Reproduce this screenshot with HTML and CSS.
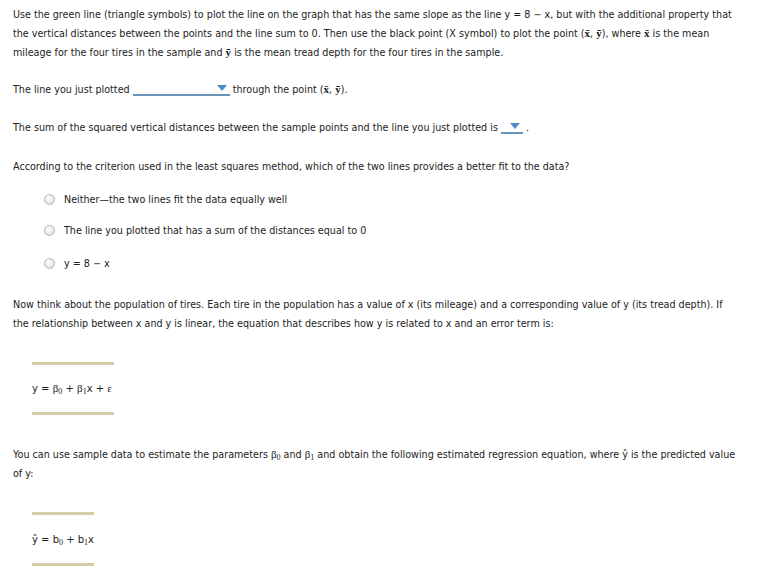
FILE: index.html
```html
<!DOCTYPE html>
<html>
<head>
<meta charset="utf-8">
<link rel="stylesheet" href="styles.css">
</head>
<body>
<div class="page">
  <p class="para p1">Use the green line (triangle symbols) to plot the line on the graph that has the same slope as the line y = 8 − x, but with the additional property that the vertical distances between the points and the line sum to 0. Then use the black point (X symbol) to plot the point (<b class="m">x̄</b>, <b class="m">ȳ</b>), where <b class="m">x̄</b> is the mean mileage for the four tires in the sample and <b class="m">ȳ</b> is the mean tread depth for the four tires in the sample.</p>

  <p class="para p2">The line you just plotted <span class="dd dd-wide"><span class="arrow"></span></span> through the point (<b class="m">x̄</b>, <b class="m">ȳ</b>).</p>

  <p class="para p3">The sum of the squared vertical distances between the sample points and the line you just plotted is <span class="dd dd-small"><span class="arrow"></span></span> .</p>

  <p class="para p4">According to the criterion used in the least squares method, which of the two lines provides a better fit to the data?</p>

  <div class="options">
    <label class="opt"><span class="radio"></span>Neither—the two lines fit the data equally well</label>
    <label class="opt"><span class="radio"></span>The line you plotted that has a sum of the distances equal to 0</label>
    <label class="opt opt-last"><span class="radio"></span>y = 8 − x</label>
  </div>

  <p class="para p5">Now think about the population of tires. Each tire in the population has a value of x (its mileage) and a corresponding value of y (its tread depth). If the relationship between x and y is linear, the equation that describes how y is related to x and an error term is:</p>

  <div class="eqbox eq1">y = <span class="s">β</span><sub>0</sub> + <span class="s">β</span><sub>1</sub>x + <span class="s">ε</span></div>

  <p class="para p6">You can use sample data to estimate the parameters <span class="s">β</span><sub>0</sub> and <span class="s">β</span><sub>1</sub> and obtain the following estimated regression equation, where ŷ is the predicted value of y:</p>

  <div class="eqbox eq2">ŷ = b<sub>0</sub> + b<sub>1</sub>x</div>
</div>
</body>
</html>
```

FILE: styles.css
```css
html, body {
  margin: 0;
  padding: 0;
  background: #ffffff;
}

.page {
  padding: 5px 30px 0 13px;
  font-family: "DejaVu Sans", Verdana, sans-serif;
  font-size: 9.6px;
  line-height: 19px;
  color: #222222;
}

.para {
  margin: 0;
}

.p2 { margin-top: 18px; }
.p3 { margin-top: 19px; }
.p4 { margin-top: 20px; }
.p5 { margin-top: 22px; }
.p6 { margin-top: 30px; }

.m {
  font-family: "Liberation Serif", "Times New Roman", serif;
  font-weight: bold;
  font-size: 11px;
  line-height: 1;
}

.s {
  font-family: "Liberation Serif", "Times New Roman", serif;
  font-size: 11px;
  line-height: 1;
}

sub {
  font-size: 8px;
  line-height: 0;
  vertical-align: -2px;
  font-family: "Liberation Serif", serif;
}

.dd {
  display: inline-block;
  position: relative;
  height: 12px;
  vertical-align: -3px;
  border-bottom: 2px solid #6a94b8;
}

.dd-wide { width: 97px; }
.dd-small { width: 22px; }

.arrow {
  position: absolute;
  right: 3px;
  top: 3px;
  width: 0;
  height: 0;
  border-left: 5px solid transparent;
  border-right: 5px solid transparent;
  border-top: 6px solid #4f8cc9;
}

.options {
  display: flex;
  flex-direction: column;
  gap: 12px;
  margin-top: 14px;
  padding-left: 31px;
}

.opt {
  display: flex;
  align-items: center;
  gap: 9px;
}

.opt-last {
  margin-top: 2px;
}

.radio {
  width: 9px;
  height: 9px;
  border-radius: 50%;
  border: 1px solid #b5b5b5;
  background: radial-gradient(circle at 40% 35%, #ffffff 0%, #e8e8e8 60%, #d6d6d6 100%);
}

.eqbox {
  margin-left: 19px;
  border-top: 3px solid #d6cca8;
  border-bottom: 3px solid #d6cca8;
  padding: 14px 0 14px 0;
  font-size: 10px;
  white-space: nowrap;
}

.eq1 {
  width: 82px;
  margin-top: 29px;
}

.eq2 {
  width: 62px;
  margin-top: 29px;
  padding-top: 15px;
}
```
